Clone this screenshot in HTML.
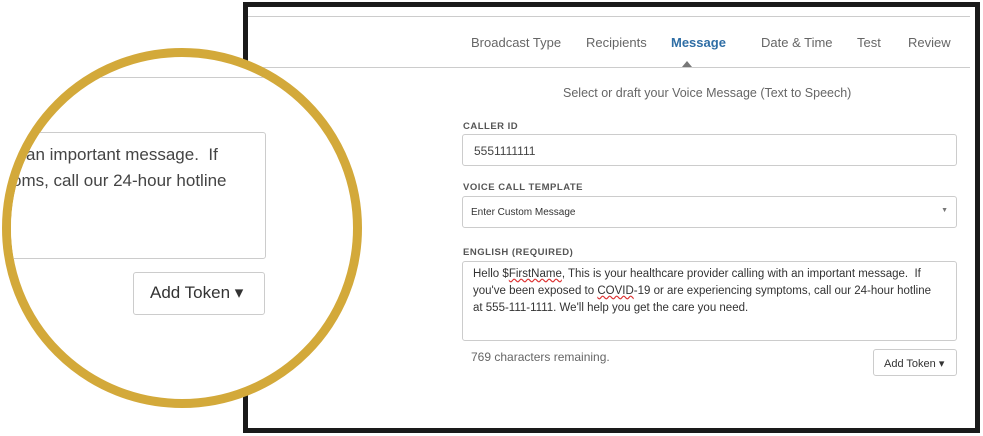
<!DOCTYPE html>
<html><head><style>
body{margin:0;width:983px;height:436px;background:#fff;position:relative;overflow:hidden;font-family:"Liberation Sans",sans-serif;}
.a{position:absolute;}
.frame{left:243px;top:2px;width:727px;height:421px;border:5px solid #1a1a1a;background:#fff;}
.tab{top:35px;font-size:13px;color:#666;}
.lbl{font-size:9.5px;font-weight:bold;color:#555;letter-spacing:.5px;}
.box{border:1px solid #ccc;border-radius:3px;background:#fff;box-sizing:border-box;}
.circ{left:2px;top:48px;width:360px;height:360px;border-radius:50%;box-sizing:border-box;border:9px solid #d3a93a;background:#fff;overflow:hidden;}
</style></head><body>
<div class="a frame"></div>
<div class="a" style="left:248px;top:16px;width:722px;height:1px;background:#ccc"></div>
<div class="a" style="left:248px;top:67px;width:722px;height:1px;background:#ccc"></div>
<div class="a tab" style="left:471px">Broadcast Type</div>
<div class="a tab" style="left:586px">Recipients</div>
<div class="a tab" style="left:671px;color:#2f6ea5;font-weight:bold">Message</div>
<div class="a tab" style="left:761px">Date &amp; Time</div>
<div class="a tab" style="left:857px">Test</div>
<div class="a tab" style="left:908px">Review</div>
<div class="a" style="left:682px;top:61px;width:0;height:0;border-left:5px solid transparent;border-right:5px solid transparent;border-bottom:6px solid #777"></div>
<div class="a" style="left:563px;top:86px;font-size:12.5px;color:#666">Select or draft your Voice Message (Text to Speech)</div>
<div class="a lbl" style="left:463px;top:121px">CALLER ID</div>
<div class="a box" style="left:462px;top:134px;width:495px;height:32px;font-size:12px;color:#444;padding:9px 0 0 11px">5551111111</div>
<div class="a lbl" style="left:463px;top:182px">VOICE CALL TEMPLATE</div>
<div class="a box" style="left:462px;top:196px;width:495px;height:32px;font-size:10px;color:#333;padding:10px 0 0 8px">Enter Custom Message<span style="position:absolute;right:8px;top:10px;font-size:7px;color:#777">▼</span></div>
<div class="a lbl" style="left:463px;top:247px">ENGLISH (REQUIRED)</div>
<div class="a box" style="left:462px;top:261px;width:495px;height:80px;font-size:11.5px;color:#333;line-height:17px;padding:4px 16px 0 10px">Hello $<span style="text-decoration:underline wavy #d33">FirstName</span>, This is your healthcare provider calling with an important message.&nbsp; If you've been exposed to <span style="text-decoration:underline wavy #d33">COVID</span>-19 or are experiencing symptoms, call our 24-hour hotline at 555-111-1111. We'll help you get the care you need.</div>
<div class="a" style="left:471px;top:350px;font-size:12px;color:#666">769 characters remaining.</div>
<div class="a box" style="left:873px;top:349px;width:84px;height:27px;font-size:11px;color:#333;padding:7px 0 0 10px">Add Token ▾</div>
<div class="a circ">
 <div class="a" style="left:0;top:20px;width:400px;height:1px;background:#ccc"></div>
 <div class="a box" style="left:-100px;top:75px;width:355px;height:127px;border-width:1.5px;font-size:17px;color:#444;line-height:26px;">
  <div style="position:absolute;left:114px;top:9px;white-space:nowrap">an important message.&nbsp; If</div>
  <div style="position:absolute;left:100px;top:35px;white-space:nowrap">oms, call our 24-hour hotline</div>
 </div>
 <div class="a box" style="left:122px;top:215px;width:132px;height:43px;border-width:1.5px;font-size:17px;color:#333;padding:10px 0 0 16px">Add Token ▾</div>
</div>
</body></html>
